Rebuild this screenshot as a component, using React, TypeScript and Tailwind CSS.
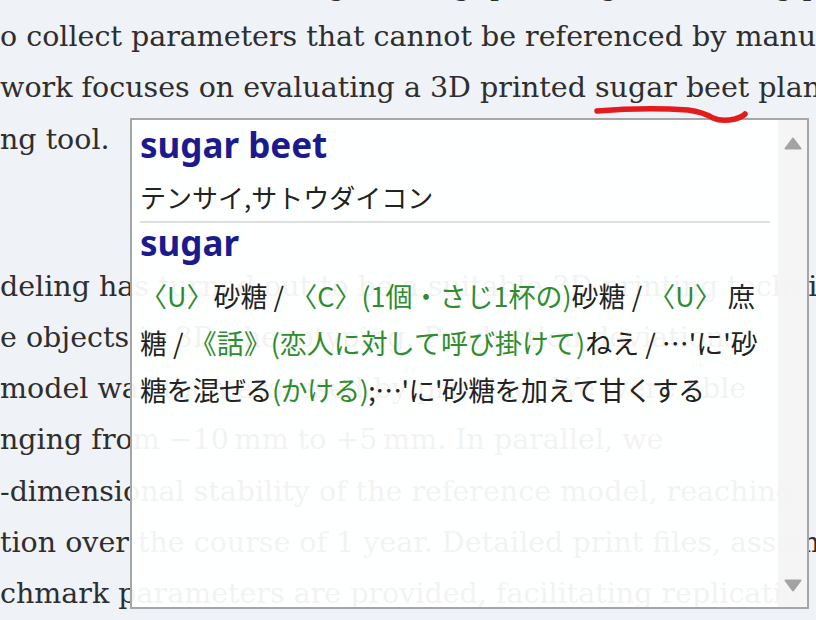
import React from "react";

const G = ({ children }: { children: React.ReactNode }) => (
  <span className="text-[#2f8c2f]">{children}</span>
);

export default function App() {
  const bgLines1 = [
    "t was used to obtain high-throughput images, enabling progress of geometry",
    "o collect parameters that cannot be referenced by manu",
    "work focuses on evaluating a 3D printed sugar beet plan",
    "ng tool.",
  ];
  const bgLines2 = [
    "deling has turned out to be a suitable 3D printing techni",
    "e objects in 3D phenotyping. Production deviations",
    "model was then assessed by printing. We were able",
    "nging from \u221210\u2009mm to +5\u2009mm. In parallel, we",
    "-dimensional stability of the reference model, reaching",
    "tion over the course of 1 year. Detailed print files, assem",
    "chmark parameters are provided, facilitating replicatio",
  ];
  return (
    <div className="relative w-[816px] h-[620px] overflow-hidden bg-[#eff2f7]">
      <div className="-mt-[40px] whitespace-nowrap text-[#2e2e2e] text-[28.5px] leading-[51.2px] font-['DejaVu_Serif',serif]">
        {bgLines1.map((l, i) => (
          <div key={i}>{l}</div>
        ))}
        <div className="mt-[96px]">
          {bgLines2.map((l, i) => (
            <div key={i}>{l}</div>
          ))}
        </div>
      </div>

      <div className="absolute left-[130px] top-[118px] w-[679px] h-[491px] border-2 border-[#a6a6a6] bg-white/[0.94] flex">
        <div className="flex-1 px-[8px] pt-[5px] whitespace-nowrap">
          <div className="font-['Noto_Sans',sans-serif] font-bold text-[35px] leading-[40px] text-[#1b1b8e]">
            sugar beet
          </div>
          <div className="mt-[9px] font-['Noto_Sans_CJK_JP',sans-serif] text-[26px] leading-[46px] text-[#222222]">
            テンサイ,サトウダイコン
          </div>
          <div className="mt-[1px] h-[2px] bg-[#dedede]" />
          <div className="font-['Noto_Sans',sans-serif] font-bold text-[35px] leading-[40px] text-[#1b1b8e]">
            sugar
          </div>
          <div className="mt-[9px] font-['Noto_Sans_CJK_JP',sans-serif] text-[27px] leading-[47px] text-[#222222]">
            <div>
              <G>〈U〉</G>砂糖 / <G>〈C〉(1個・さじ1杯の)</G>砂糖 / <G>〈U〉</G> 庶
            </div>
            <div>
              糖 / <G>《話》(恋人に対して呼び掛けて)</G>ねえ / …'に'砂
            </div>
            <div className="tracking-[-0.6px]">
              糖を混ぜる<G>(かける)</G>;…'に'砂糖を加えて甘くする
            </div>
          </div>
        </div>
        <div className="w-[29px] bg-[#f4f4f4]/[0.9] flex flex-col items-center justify-between pt-[17px] pb-[15px]">
          <svg width="18" height="13" viewBox="0 0 18 13">
            <path d="M9 1.5 L16.5 11.5 L1.5 11.5 Z" fill="#a3a3a3" stroke="#a3a3a3" strokeWidth="2" strokeLinejoin="round" />
          </svg>
          <svg width="18" height="13" viewBox="0 0 18 13">
            <path d="M1.5 1.5 L16.5 1.5 L9 11.5 Z" fill="#a3a3a3" stroke="#a3a3a3" strokeWidth="2" strokeLinejoin="round" />
          </svg>
        </div>
      </div>

      <svg className="absolute left-0 top-0 pointer-events-none" width="816" height="620" viewBox="0 0 816 620">
        <path
          d="M597 111 Q 645 107 688 110 Q 703 112 713 118 Q 722 122 735 119 Q 742 117 745 114"
          fill="none"
          stroke="#e21c1c"
          strokeWidth="5.5"
          strokeLinecap="round"
          strokeLinejoin="round"
        />
      </svg>
    </div>
  );
}
